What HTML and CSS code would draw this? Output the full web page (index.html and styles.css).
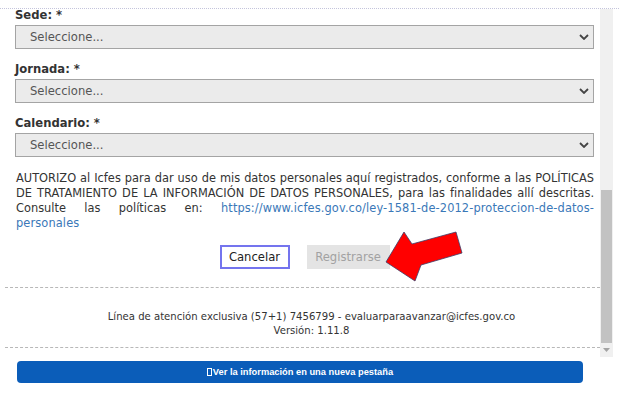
FILE: index.html
```html
<!DOCTYPE html>
<html lang="es">
<head>
<meta charset="utf-8">
<title>Registro</title>
<link rel="stylesheet" href="styles.css">
</head>
<body>
<div class="frame">
  <div class="content">
    <form class="form">
      <div class="group">
        <label class="label">Sede: *</label>
        <div class="select-wrap">
          <select class="select"><option>Seleccione...</option></select>
          <svg class="chev" width="10" height="6" viewBox="0 0 10 6"><path d="M1 1 L5 5 L9 1" fill="none" stroke="#444" stroke-width="1.8"/></svg>
        </div>
      </div>
      <div class="group">
        <label class="label">Jornada: *</label>
        <div class="select-wrap">
          <select class="select"><option>Seleccione...</option></select>
          <svg class="chev" width="10" height="6" viewBox="0 0 10 6"><path d="M1 1 L5 5 L9 1" fill="none" stroke="#444" stroke-width="1.8"/></svg>
        </div>
      </div>
      <div class="group">
        <label class="label">Calendario: *</label>
        <div class="select-wrap">
          <select class="select"><option>Seleccione...</option></select>
          <svg class="chev" width="10" height="6" viewBox="0 0 10 6"><path d="M1 1 L5 5 L9 1" fill="none" stroke="#444" stroke-width="1.8"/></svg>
        </div>
      </div>
      <p class="terms">AUTORIZO al Icfes para dar uso de mis datos personales aquí registrados, conforme a las POLÍTICAS DE TRATAMIENTO DE LA INFORMACIÓN DE DATOS PERSONALES, para las finalidades allí descritas. Consulte las políticas en: <a class="link" href="#">https://www.icfes.gov.co/ley-1581-de-2012-proteccion-de-datos-personales</a></p>
      <div class="actions">
        <button type="button" class="btn btn-cancel">Cancelar</button>
        <button type="button" class="btn btn-register" disabled>Registrarse</button>
        <svg class="arrow" width="90" height="60" viewBox="380 222 90 60"><polygon points="386,259 404,229 412,241 456,229 462,250 421,262 415,278" fill="#ff0000" stroke="#3a3f6a" stroke-width="0.8" stroke-linejoin="miter"/></svg>
      </div>
    </form>
    <footer class="footer">
      <div class="footer-line">Línea de atención exclusiva (57+1) 7456799 - evaluarparaavanzar@icfes.gov.co</div>
      <div class="footer-line">Versión: 1.11.8</div>
    </footer>
  </div>
  <div class="scrollbar">
    <div class="track"></div>
    <div class="thumb"></div>
    <div class="arrow-down"><svg width="7" height="4" viewBox="0 0 7 4"><polygon points="0,0 7,0 3.5,4" fill="#a3a3a3"/></svg></div>
  </div>
</div>
<div class="bottom">
  <button type="button" class="newtab"><span class="tofu"></span>Ver la información en una nueva pestaña</button>
</div>
</body>
</html>
```

FILE: styles.css
```css
html, body {
  margin: 0;
  padding: 0;
  background: #ffffff;
}
body {
  width: 619px;
  height: 395px;
  overflow: hidden;
  font-family: "DejaVu Sans", Verdana, sans-serif;
  color: #333333;
}
.frame {
  margin-top: 8px;
  border-top: 1px dotted #c4c4dc;
  display: flex;
  height: 348px;
}
.content {
  width: 600px;
  overflow: hidden;
}
.form {
  padding: 0 6px 0 15px;
}
.group {
  margin-bottom: 14px;
}
.label {
  display: block;
  font-weight: bold;
  font-size: 11.6px;
  line-height: 12px;
  margin-bottom: 4px;
  color: #333;
}
.select-wrap {
  position: relative;
}
.select {
  appearance: none;
  -webkit-appearance: none;
  display: block;
  width: 100%;
  height: 24px;
  margin: 0;
  border: 1px solid #a4a4a4;
  border-radius: 0;
  background: #ebebeb;
  color: #555;
  font-family: "DejaVu Sans", Verdana, sans-serif;
  font-size: 11.6px;
  padding: 0 0 0 14px;
}
.chev {
  position: absolute;
  right: 5px;
  top: 9px;
}
.terms {
  margin: 8px 0 0 1px;
  font-size: 11.4px;
  line-height: 15px;
  text-align: justify;
  color: #333;
}
.link {
  color: #3a78b8;
  text-decoration: none;
  letter-spacing: 0.12px;
}
.actions {
  position: relative;
  display: flex;
  justify-content: center;
  gap: 17px;
  margin-top: 14px;
}
.btn {
  height: 24px;
  font-family: "DejaVu Sans", Verdana, sans-serif;
  font-size: 11.6px;
  padding: 0 6px;
  border-radius: 0;
  margin: 0;
}
.btn-cancel {
  width: 70px;
  background: #ffffff;
  border: 2px solid #7474ee;
  color: #222;
}
.btn-register {
  width: 83px;
  background: #e4e4e4;
  border: 1px solid #e4e4e4;
  color: #a2a2a2;
}
.arrow {
  position: absolute;
  left: 365px;
  top: -20px;
}
.footer {
  margin: 18px 0 0 5px;
  border-top: 1px dashed #b8b8b8;
  border-bottom: 1px dashed #b8b8b8;
  padding: 22px 0 9px 18px;
  text-align: center;
  font-size: 10.1px;
  line-height: 14px;
  color: #333;
}
.scrollbar {
  width: 13px;
  display: flex;
  flex-direction: column;
  background: #f0f0f0;
}
.track {
  height: 181px;
}
.thumb {
  height: 153px;
  background: #c2c2c2;
  margin: 0 1px;
}
.arrow-down {
  height: 14px;
  display: flex;
  align-items: center;
  justify-content: center;
}
.bottom {
  padding: 4px 36px 0 17px;
}
.newtab {
  display: flex;
  align-items: center;
  justify-content: center;
  width: 566px;
  height: 22px;
  background: #0b5db9;
  color: #ffffff;
  border: none;
  border-radius: 4px;
  font-family: "Liberation Sans", Arial, sans-serif;
  font-size: 9.3px;
  font-weight: bold;
  padding: 0;
}
.tofu {
  display: inline-block;
  width: 3px;
  height: 6px;
  border: 1px solid #ffffff;
  margin-right: 1px;
}
```
